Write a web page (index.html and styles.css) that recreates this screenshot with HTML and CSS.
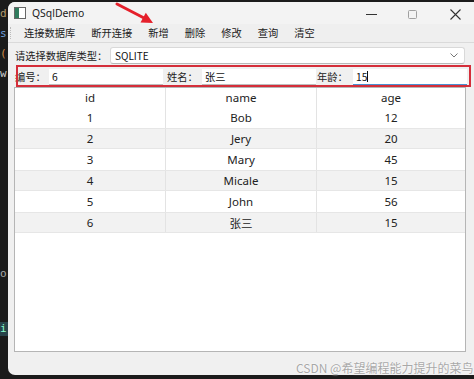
FILE: index.html
```html
<!DOCTYPE html>
<html lang="zh">
<head>
<meta charset="utf-8">
<title>QSqlDemo</title>
<link rel="stylesheet" href="styles.css">
</head>
<body>
<div class="desktop">
  <div class="gutter">
    <div class="gl c1">d</div>
    <div class="gl c2">s</div>
    <div class="gl c3">(</div>
    <div class="gl c4">w</div>
    <div class="gl"></div>
    <div class="gl"></div>
    <div class="gl"></div>
    <div class="gl"></div>
    <div class="gl"></div>
    <div class="gl"></div>
    <div class="gl"></div>
    <div class="gl"></div>
    <div class="gl"></div>
    <div class="gl c5">o</div>
    <div class="gl"></div>
    <div class="gl sel">i</div>
  </div>
  <div class="window">
    <div class="titlebar">
      <svg class="appicon" width="12" height="12" viewBox="0 0 12 12"><rect x="0.5" y="0.5" width="11" height="11" fill="#fff" stroke="#666"/><rect x="1" y="1" width="4" height="10" fill="#2f7a5c"/></svg>
      <span class="title">QSqlDemo</span>
      <svg class="controls" width="110" height="22" viewBox="0 0 110 22">
        <line x1="2" y1="12.5" x2="13" y2="12.5" stroke="#333" stroke-width="1"/>
        <rect x="44.5" y="8.5" width="8" height="8" rx="1" fill="none" stroke="#a0a0a0" stroke-width="1"/>
        <path d="M86.5 7.5 L96.5 17.5 M96.5 7.5 L86.5 17.5" stroke="#333" stroke-width="1.1" fill="none"/>
      </svg>
    </div>
    <div class="menubar">
      <span class="grip"></span>
      <span class="mi">连接数据库</span>
      <span class="mi">断开连接</span>
      <span class="mi">新增</span>
      <span class="mi">删除</span>
      <span class="mi">修改</span>
      <span class="mi">查询</span>
      <span class="mi">清空</span>
    </div>
    <div class="dbrow">
      <span class="lbl">请选择数据库类型：</span>
      <div class="combo"><span>SQLITE</span><svg width="8" height="5" viewBox="0 0 8 5"><path d="M0.5 0.5 L4 4 L7.5 0.5" fill="none" stroke="#777" stroke-width="1"/></svg></div>
    </div>
    <div class="formrow">
      <div class="field"><span class="lbl">编号：</span><div class="input">6</div></div>
      <div class="field"><span class="lbl">姓名：</span><div class="input">张三</div></div>
      <div class="field"><span class="lbl">年龄：</span><div class="input focus">15<span class="caret"></span></div></div>
    </div>
    <div class="table">
      <div class="tr head"><div class="td">id</div><div class="td">name</div><div class="td">age</div></div>
      <div class="tr"><div class="td">1</div><div class="td">Bob</div><div class="td">12</div></div>
      <div class="tr alt"><div class="td">2</div><div class="td">Jery</div><div class="td">20</div></div>
      <div class="tr"><div class="td">3</div><div class="td">Mary</div><div class="td">45</div></div>
      <div class="tr alt"><div class="td">4</div><div class="td">Micale</div><div class="td">15</div></div>
      <div class="tr"><div class="td">5</div><div class="td">John</div><div class="td">56</div></div>
      <div class="tr alt last"><div class="td">6</div><div class="td">张三</div><div class="td">15</div></div>
    </div>
  </div>
  <div class="highlight"></div>
  <svg class="arrow" width="160" height="30" viewBox="0 0 160 30"><line x1="117" y1="4" x2="145" y2="18.5" stroke="#e5202b" stroke-width="3" stroke-linecap="round"/><polygon points="153,23 140.5,22.5 145.8,12.8" fill="#e5202b"/></svg>
  <div class="watermark">CSDN @希望编程能力提升的菜鸟</div>
</div>
</body>
</html>
```
FILE: styles.css
```css
html, body {
  margin: 0;
  padding: 0;
}
body {
  width: 474px;
  height: 379px;
  overflow: hidden;
  background: #1b1b1b;
}
.desktop {
  position: relative;
  width: 474px;
  height: 379px;
  display: flex;
  overflow: hidden;
  background: #1b1b1b;
}
.gutter {
  width: 8px;
  flex: none;
  padding-top: 4px;
  overflow: hidden;
  font-family: "DejaVu Sans Mono", monospace;
  font-size: 11px;
}
.gl {
  height: 20px;
  line-height: 20px;
  white-space: nowrap;
  text-align: left;
  color: #999;
}
.gl.c1 { color: #b49a6c; }
.gl.c2 { color: #6f9fd8; }
.gl.c3 { color: #d08a45; }
.gl.c4 { color: #c8c8c8; }
.gl.c5 { color: #aaa; }
.gl.sel { background: #28434a; color: #8fc; margin-top: 18px; height: 14px; line-height: 14px; }
.window {
  margin-top: 2px;
  width: 466px;
  height: 373px;
  flex: none;
  background: #f0f0f0;
  border-radius: 7px 0 0 7px;
  display: flex;
  flex-direction: column;
  overflow: hidden;
}
.titlebar {
  height: 22px;
  flex: none;
  display: flex;
  align-items: center;
  background: #f3f3f3;
  padding-left: 6px;
}
.appicon { display: block; margin-right: 6px; margin-top: -1px; }
.title {
  font-family: "Noto Sans", sans-serif;
  font-size: 10.4px;
  color: #1a1a1a;
}
.controls {
  display: block;
  margin-left: auto;
  flex: none;
}
.menubar {
  height: 18px;
  flex: none;
  display: flex;
  align-items: center;
  border-bottom: 1px solid #dadada;
  background: #efefef;
  font-family: "Noto Sans CJK SC", sans-serif;
  font-size: 10.25px;
  color: #222;
}
.grip {
  width: 1px;
  height: 12px;
  margin-left: 2px;
  margin-right: 4px;
  border-left: 1px dotted #bbb;
}
.mi { padding: 0 8px; line-height: 18px; }
.lbl {
  font-family: "Noto Sans CJK SC", sans-serif;
  font-size: 10.25px;
  color: #222;
  white-space: nowrap;
}
.dbrow {
  height: 23px;
  flex: none;
  display: flex;
  align-items: center;
  padding-left: 7px;
  padding-top: 2px;
  box-sizing: border-box;
}
.dbrow .lbl { width: 95px; }
.combo {
  width: 355px;
  height: 17px;
  box-sizing: border-box;
  background: #fff;
  border: 1px solid #d9d9d9;
  border-bottom-color: #b8b8b8;
  border-radius: 3px;
  display: flex;
  align-items: center;
  justify-content: space-between;
  padding: 0 6px 0 4px;
  font-family: "Noto Sans CJK SC", sans-serif;
  font-size: 10px;
  color: #111;
}
.formrow {
  height: 21px;
  flex: none;
  display: grid;
  grid-template-columns: 151px 151px 151px;
  padding-left: 7px;
  align-items: center;
}
.field { display: flex; align-items: center; }
.field .lbl { width: 34px; }
.field:nth-child(2) .lbl { width: 35px; padding-left: 1px; }
.field:nth-child(3) .lbl { width: 36px; }
.input {
  width: 114px;
  height: 16px;
  box-sizing: border-box;
  background: #fff;
  border-bottom: 1px solid #bdbdbd;
  padding-left: 3px;
  font-family: "Noto Sans CJK SC", sans-serif;
  font-size: 10.25px;
  line-height: 15px;
  color: #111;
  display: flex;
  align-items: center;
}
.input.focus { border-bottom: 1px solid #4a90d0; }
.caret {
  display: inline-block;
  width: 1px;
  height: 11px;
  background: #111;
}
.table {
  margin-left: 6px;
  width: 452px;
  height: 265px;
  flex: none;
  box-sizing: border-box;
  border: 1px solid #b5b5b5;
  background: #fff;
  font-family: "Noto Sans", "Noto Sans CJK SC", sans-serif;
  font-size: 11.5px;
  color: #222;
}
.tr {
  display: grid;
  grid-template-columns: 151px 151px 148px;
  height: 21px;
  box-sizing: border-box;
}
.tr.head { height: 19px; }
.tr.alt { background: #f2f2f2; border-top: 1px solid #e6e6e6; border-bottom: 1px solid #e6e6e6; }
.td {
  display: flex;
  align-items: center;
  justify-content: center;
  border-right: 1px solid #e3e3e3;
}
.td:last-child { border-right: none; }
.highlight {
  position: absolute;
  left: 16px;
  top: 65px;
  width: 455px;
  height: 22px;
  box-sizing: border-box;
  border: 2px solid #d42e3a;
}
.arrow {
  position: absolute;
  left: 0;
  top: 0;
}
.watermark {
  position: absolute;
  left: 296px;
  top: 359px;
  font-family: "Noto Sans CJK SC", sans-serif;
  font-size: 12px;
  color: #a8a8a8;
  white-space: nowrap;
  text-shadow: 0 0 1px #fff, 0 0 2px #fff;
}
```
